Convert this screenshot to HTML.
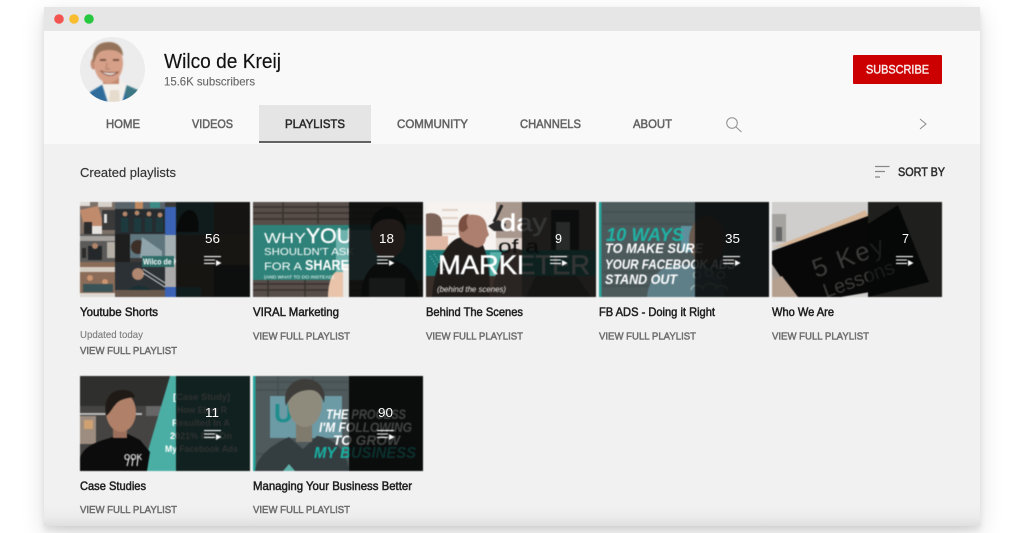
<!DOCTYPE html>
<html lang="en"><head><meta charset="utf-8"><title>Wilco de Kreij - Playlists</title>
<style>
html,body{margin:0;padding:0;width:1024px;height:533px;overflow:hidden;background:#fff}
#sh{position:absolute;left:44px;top:7px;width:936px;height:519px;box-shadow:0 8px 22px rgba(0,0,0,.13),0 4px 6px rgba(0,0,0,.09)}
svg.page{position:absolute;left:0;top:0;font-family:"Liberation Sans",sans-serif;filter:blur(.3px)}
.tab{font-size:11.5px;fill:#636363;stroke:#636363;stroke-width:.5}
.t{font-size:12px;fill:#1e1e1e;stroke:#1e1e1e;stroke-width:.5}
.v{font-size:10.5px;fill:#6e6e6e;stroke:#6e6e6e;stroke-width:.5}
.n{font-size:13px;fill:#fff}
.blur{filter:blur(.55px)}
.blur2{filter:blur(.8px)}
</style></head><body>
<div id="sh"></div>
<svg class="page" width="1024" height="533" viewBox="0 0 1024 533" xmlns="http://www.w3.org/2000/svg">
<defs>
<linearGradient id="bot" x1="0" y1="0" x2="0" y2="1"><stop offset="0" stop-color="#f1f1f1"/><stop offset=".55" stop-color="#ececec"/><stop offset="1" stop-color="#dfdfdf"/></linearGradient>
<clipPath id="av"><circle cx="112.5" cy="69.5" r="32.5"/></clipPath>
<g id="pl"><path d="M124 54.6h17M124 58h11M124 61.4h11" stroke="#fff" stroke-width="1.1" fill="none"/><path d="M136 58l5.5 3-5.500 3z" fill="#fff"/></g>
</defs>
<rect x="44" y="7" width="936" height="519" fill="#f1f1f1"/>
<rect x="44" y="505" width="936" height="21" fill="url(#bot)"/>
<rect x="44" y="7" width="936" height="24" fill="#e6e6e6"/>
<rect x="44" y="31" width="936" height="113" fill="#f9f9f9"/>
<circle cx="59" cy="19" r="4.800" fill="#f2554f"/><circle cx="74" cy="19" r="4.800" fill="#fbbd30"/><circle cx="89" cy="19" r="4.800" fill="#27c840"/>

<!-- avatar -->
<circle cx="112.500" cy="69.500" r="32.500" fill="#ececec"/>
<g clip-path="url(#av)"><g class="blur2">
<path d="M88 102l2-10 15-9h14l15 6 6 13z" fill="#2f6c9c"/>
<path d="M124 84l14 6 2 12h-13z" fill="#3d7785"/>
<path d="M102 84l6 19h14l5-19-8-4h-10z" fill="#f3f0ec"/>
<path d="M110 90h9l1 12h-11z" fill="#e6dccd"/>
<rect x="103" y="74" width="16" height="10" fill="#c4896e"/>
<ellipse cx="93.500" cy="64" rx="2.800" ry="5.500" fill="#c08a72"/>
<ellipse cx="108.500" cy="63" rx="14.500" ry="20" fill="#d6a088"/>
<path d="M93 63c-1-14 4-21 16-21 9 0 14 6 14 14-3-4-7-6-13-6-6 0-10 1-12 4-3 3-2 6-5 9z" fill="#94735a"/>
<path d="M100 60h6M113 60h6" stroke="#5c3e2e" stroke-width="1.400"/>
<path d="M107 63l-1 6h4" fill="none" stroke="#b07c64" stroke-width="1"/>
<path d="M101 71c4 5 12 6 17 1-4 1-12 1-17-1z" fill="#fff" stroke="#7c4c3c" stroke-width=".9"/>
</g></g>

<!-- header text -->
<text x="164" y="68" font-size="20" fill="#111" stroke="#111" stroke-width=".15" textLength="117" lengthAdjust="spacingAndGlyphs">Wilco de Kreij</text>
<text x="164" y="85.500" font-size="12" fill="#666" stroke="#666" stroke-width=".12" textLength="91" lengthAdjust="spacingAndGlyphs">15.6K subscribers</text>
<rect x="853" y="55" width="89" height="29" rx="1" fill="#cc0000"/>
<text x="866" y="73.500" font-size="11.500" fill="#fbeaea" stroke="#fbeaea" stroke-width=".45" textLength="63" lengthAdjust="spacingAndGlyphs">SUBSCRIBE</text>

<!-- tabs -->
<rect x="259" y="105" width="112" height="36" fill="#e5e5e5"/>
<rect x="259" y="141" width="112" height="2" fill="#626262"/>
<text x="106" y="128" class="tab" textLength="34" lengthAdjust="spacingAndGlyphs">HOME</text>
<text x="192" y="128" class="tab" textLength="41" lengthAdjust="spacingAndGlyphs">VIDEOS</text>
<text x="285" y="128" class="tab" style="fill:#2a2a2a;stroke:#2a2a2a" textLength="60" lengthAdjust="spacingAndGlyphs">PLAYLISTS</text>
<text x="397" y="128" class="tab" textLength="71" lengthAdjust="spacingAndGlyphs">COMMUNITY</text>
<text x="520" y="128" class="tab" textLength="61" lengthAdjust="spacingAndGlyphs">CHANNELS</text>
<text x="633" y="128" class="tab" textLength="39" lengthAdjust="spacingAndGlyphs">ABOUT</text>
<g fill="none" stroke="#8f8f8f" stroke-width="1"><circle cx="732" cy="123" r="5.300"/><path d="M736 127l5.500 5"/></g>
<path d="M920 119l6 5-6 5" fill="none" stroke="#8a8a8a" stroke-width="1"/>

<text x="80" y="177" font-size="13" fill="#333" stroke="#333" stroke-width=".15" textLength="96" lengthAdjust="spacingAndGlyphs">Created playlists</text>
<path d="M875 166.500h14.500M875 171.500h10M875 177h5" stroke="#888" stroke-width="1.200"/>
<text x="898" y="176" font-size="11.500" fill="#2c2c2c" stroke="#2c2c2c" stroke-width=".5" textLength="47" lengthAdjust="spacingAndGlyphs">SORT BY</text>

<!-- THUMB 1 -->
<svg x="80" y="202" width="170" height="95" viewBox="0 0 170 95" class="blur">
<rect width="170" height="95" fill="#3b3a39"/>
<rect width="35" height="32" fill="#7d7067"/>
<path d="M0 8l18-4 6 20H4z" fill="#c08a6c"/><rect x="4" y="20" width="8" height="12" fill="#2c2c2c"/><rect x="22" y="8" width="13" height="20" fill="#3a3a3a"/><path d="M18 0h14v5H18z" fill="#d5d0c8"/><path d="M0 0h10v4H0z" fill="#e0dcd6"/><rect x="24" y="12" width="3" height="9" fill="#ddd"/><rect x="12" y="24" width="10" height="8" fill="#e6e3df"/>
<rect x="35" width="50" height="33" fill="#262c2f"/>
<rect x="35" width="50" height="7" fill="#59636a"/><path d="M55 0h8v7h-8z" fill="#c08a62"/><path d="M70 0h10v6H70z" fill="#3a8a86"/>
<circle cx="45" cy="12" r="2.500" fill="#b08468"/><circle cx="57" cy="11" r="2.500" fill="#b08468"/><circle cx="69" cy="12" r="2.500" fill="#b08468"/><circle cx="80" cy="13" r="2.500" fill="#b08468"/>
<rect x="41" y="16" width="7" height="14" fill="#1d3b3e"/><rect x="54" y="16" width="7" height="14" fill="#1d3b3e"/><rect x="65" y="16" width="7" height="14" fill="#1d3b3e"/><rect x="76" y="16" width="7" height="14" fill="#1d3b3e"/>
<rect x="85" y="5" width="11" height="28" fill="#3a63b5"/>
<rect y="32" width="35" height="28" fill="#5c5a58"/><rect x="8" y="44" width="14" height="14" fill="#24282a"/><rect y="34" width="35" height="5" fill="#a5a29e"/><circle cx="15" cy="44" r="3" fill="#b08468"/><rect x="27" y="40" width="8" height="16" fill="#b5aea6"/><rect x="2" y="46" width="4" height="10" fill="#2b2b2b"/>
<rect x="35" y="32" width="15" height="28" fill="#1e1e1e"/>
<rect x="50" y="32" width="35" height="24" fill="#5f767e"/><circle cx="58" cy="45" r="7" fill="#3d2f28"/><path d="M62 35l20 14v7H60z" fill="#8fa4ab"/>
<rect x="85" y="33" width="11" height="28" fill="#a3afb3"/>
<rect y="60" width="35" height="35" fill="#8a6c58"/><rect y="65" width="35" height="5" fill="#d6cdc2"/><circle cx="10" cy="76" r="3" fill="#cc9470"/><circle cx="25" cy="80" r="3" fill="#cc9470"/><rect x="3" y="82" width="30" height="8" fill="#3a5357"/><rect y="91" width="35" height="4" fill="#ddd8d1"/>
<rect x="35" y="60" width="50" height="35" fill="#2c3135"/><circle cx="58" cy="72" r="6" fill="#b08770"/><path d="M44 95c2-14 26-16 32 0z" fill="#1a3034"/><path d="M63 67l22 14M63 71l22 14" stroke="#d8dde0" stroke-width="1"/>
<rect x="35" y="88" width="50" height="7" fill="#6a5a4e"/>
<rect x="85" y="61" width="11" height="24" fill="#aaa"/><rect x="85" y="85" width="11" height="10" fill="#3a63b5"/>
<rect x="62" y="54" width="32" height="11" fill="#2f6e69"/>
<text x="63" y="62.500" font-size="8" font-weight="bold" fill="#fff" textLength="46" lengthAdjust="spacingAndGlyphs">Wilco de Kreij</text>
<rect x="96" width="38" height="33" fill="#3f7c86"/><path d="M96 30c2-12 6-22 14-22 6 0 10 10 8 22z" fill="#111"/>
<rect x="134" width="36" height="33" fill="#5d5044"/><rect x="96" y="33" width="38" height="30" fill="#695a4a"/><rect x="134" y="33" width="36" height="30" fill="#70604e"/><rect x="96" y="63" width="38" height="32" fill="#6d5a48"/><rect x="134" y="63" width="36" height="32" fill="#2d2d2b"/><rect x="96" y="85" width="25" height="10" fill="#3c8a8e"/>
<rect x="96" width="74" height="95" fill="#070808" fill-opacity=".84"/>
<use href="#pl"/>
</svg>
<text x="205" y="243" class="n" textLength="15" lengthAdjust="spacingAndGlyphs">56</text>

<!-- THUMB 2 -->
<svg x="253" y="202" width="170" height="95" viewBox="0 0 170 95" class="blur">
<rect width="170" height="95" fill="#574e49"/>
<path d="M0 5h170M0 11h170M0 17h170M0 82h170M0 88h170M30 0v22M65 0v22M15 78v17M52 78v17" stroke="#38322f" stroke-width="1.500"/>
<rect y="23" width="170" height="55" fill="#2e8279"/>
<rect x="83" y="28" width="50" height="50" fill="#6fb3ae"/>
<path d="M85 70c-4-2-10 8-10 25h21V70z" fill="#e9c4aa"/>
<rect x="90" y="62" width="6" height="33" fill="#e8e8e4"/>
<ellipse cx="135" cy="35" rx="17" ry="22" fill="#b08a70"/>
<path d="M118 30c-2-16 8-25 18-25s19 9 17 25c-3-10-8-13-17-13s-15 4-18 13z" fill="#111"/>
<path d="M108 95c0-22 12-37 28-37s30 15 30 37z" fill="#1d2526"/>
<rect x="116" y="76" width="36" height="19" fill="#777"/>
<g fill="#fff">
<text x="11" y="41" font-size="15" textLength="42" lengthAdjust="spacingAndGlyphs">WHY</text>
<text x="53" y="41" font-size="21" stroke="#fff" stroke-width=".4" textLength="46" lengthAdjust="spacingAndGlyphs">YOU</text>
<text x="11" y="53" font-size="10.500" textLength="90" lengthAdjust="spacingAndGlyphs">SHOULDN'T ASK</text>
<text x="11" y="68" font-size="11" textLength="38" lengthAdjust="spacingAndGlyphs">FOR A</text>
<text x="52" y="68" font-size="15" font-weight="bold" textLength="44" lengthAdjust="spacingAndGlyphs">SHARE</text>
<text x="11" y="76.500" font-size="4.500" textLength="70" lengthAdjust="spacingAndGlyphs">(AND WHAT TO DO INSTEAD)</text>
</g>
<rect x="96" width="74" height="95" fill="#070808" fill-opacity=".86"/>
<use href="#pl"/>
</svg>
<text x="379" y="243" class="n" textLength="15" lengthAdjust="spacingAndGlyphs">18</text>

<!-- THUMB 3 -->
<svg x="426" y="202" width="170" height="95" viewBox="0 0 170 95" class="blur">
<rect width="170" height="95" fill="#d6c2b4"/>
<rect width="70" height="50" fill="#f7f3f0"/><path d="M16 8h16M16 16h16M16 24h16M16 32h14" stroke="#e0d2c8" stroke-width="2"/>
<path d="M0 12c8-2 16 0 16 10v16l-16 4z" fill="#7c6458"/>
<rect x="0" y="34" width="22" height="16" fill="#e0b8a4"/>
<rect x="70" y="0" width="26" height="95" fill="#a8978c"/>
<rect x="70" y="36" width="26" height="14" fill="#e0d6cf"/>
<rect y="48" width="170" height="26" fill="#1e7a76"/>
<rect x="64" y="50" width="32" height="24" fill="#54b0a6"/>
<rect x="0" y="74" width="96" height="21" fill="#3a2e28"/>
<path d="M6 95c2-25 10-50 24-58 8-4 20-3 26 4 6 12 8 30 8 54z" fill="#1f1c1a"/>
<path d="M76 50l12-4 8 2v47H64z" fill="#2a2422"/>
<path d="M33 26c0-10 8-15 17-13 8 1 11 8 11 14l2 6-3 3c-1 8-8 12-13 8-6-2-16-6-14-18z" fill="#ad7f6e"/>
<path d="M33 28c-2-10 4-16 10-16-3 4-3 8-1 14-3 3-5 6-9 2z" fill="#7a4f42"/>
<path d="M62 24l10-6 8 4-2 7-10 0z" fill="#2a2a2a"/><path d="M76 3L68 20" stroke="#222" stroke-width="3"/>
<path d="M4 54l8 12M8 52l10 16" stroke="#8ed0c7" stroke-width="1" stroke-dasharray="1 2"/>
<rect x="96" y="0" width="74" height="95" fill="#7f746c"/><rect x="125" y="8" width="28" height="62" fill="#222"/><rect x="130" y="20" width="14" height="32" fill="#bbb"/><path d="M100 95l10-22h40l15 22z" fill="#55504c"/>
<rect x="96" y="48" width="74" height="26" fill="#2a8e88"/>
<text x="74" y="29" font-size="24" fill="#fff" stroke="#fff" stroke-width=".5" textLength="47" lengthAdjust="spacingAndGlyphs">day</text>
<text x="72" y="51" font-size="19" fill="#111" textLength="41" lengthAdjust="spacingAndGlyphs">of a</text>
<text x="12" y="72" font-size="27" fill="#fff" stroke="#fff" stroke-width=".5" textLength="152" lengthAdjust="spacingAndGlyphs">MARKETER</text>
<text x="11" y="90" font-size="8.500" font-style="italic" fill="#f1ece8" textLength="69" lengthAdjust="spacingAndGlyphs">(behind the scenes)</text>
<rect x="96" width="74" height="95" fill="#070808" fill-opacity=".82"/>
<use href="#pl"/>
</svg>
<text x="555" y="243" class="n" textLength="7" lengthAdjust="spacingAndGlyphs">9</text>

<!-- THUMB 4 -->
<svg x="599" y="202" width="170" height="95" viewBox="0 0 170 95" class="blur">
<rect width="170" height="95" fill="#4c5a5c"/>
<path d="M3 10h94M3 22h94M3 70h94M3 84h94" stroke="#465254" stroke-width="2"/>
<rect x="0" width="2.500" height="95" fill="#27a49a"/>
<rect x="82" y="24" width="30" height="26" fill="#5f8f9c"/>
<path d="M48 95c2-20 14-32 32-32h20c14 0 24 14 26 32z" fill="#5f7f88"/>
<ellipse cx="108" cy="38" rx="18" ry="24" fill="#6a5a50"/>
<text x="7" y="39" font-size="18" font-weight="bold" font-style="italic" fill="#1fb3a5" textLength="78" lengthAdjust="spacingAndGlyphs">10 WAYS</text>
<g font-size="14" font-weight="bold" font-style="italic" fill="#fff">
<text x="6" y="51" textLength="98" lengthAdjust="spacingAndGlyphs">TO MAKE SURE</text>
<text x="6" y="67" textLength="130" lengthAdjust="spacingAndGlyphs">YOUR FACEBOOK ADS</text>
<text x="6" y="82" textLength="72" lengthAdjust="spacingAndGlyphs">STAND OUT</text>
</g>
<g fill="none" stroke="#a8bbb9" stroke-width="1.200"><circle cx="98" cy="73" r="3.500"/><circle cx="110" cy="71" r="3.500"/><circle cx="122" cy="73" r="3.500"/><path d="M92 88c0-5 10-8 12 0M104 86c2-6 12-6 14 0M116 88c2-6 12-6 12 0"/></g>
<rect x="96" width="74" height="95" fill="#070808" fill-opacity=".86"/>
<use href="#pl"/>
</svg>
<text x="725" y="243" class="n" textLength="15" lengthAdjust="spacingAndGlyphs">35</text>

<!-- THUMB 5 -->
<svg x="772" y="202" width="170" height="95" viewBox="0 0 170 95" class="blur">
<rect width="170" height="95" fill="#cfcecc"/>
<rect x="0" y="12" width="14" height="28" fill="#a5a39f"/><rect x="4" y="25" width="6" height="14" fill="#666"/>
<path d="M0 46L85 12l8-4 4 6-30 20z" fill="#d6b698"/>
<rect y="60" width="20" height="35" fill="#a8a098"/>
<path d="M0 49L126 3l31 77-88 15H26L12 80 0 62z" fill="#080808"/>
<path d="M0 78l10-4 16 21H0z" fill="#b5a090"/>
<rect x="96" width="74" height="95" fill="#44413e"/>
<path d="M96 22L126 3l31 77-61 15z" fill="#060606"/>
<g fill="#6e6e6a" opacity=".5"><text x="44" y="76" font-size="26" transform="rotate(-20 44 76)" letter-spacing="2">5 Key</text><text x="54" y="96" font-size="20" transform="rotate(-20 54 96)">Lessons</text></g>
<rect x="96" width="74" height="95" fill="#070808" fill-opacity=".6"/>
<use href="#pl"/>
</svg>
<text x="902" y="243" class="n" textLength="7" lengthAdjust="spacingAndGlyphs">7</text>

<!-- THUMB 6 -->
<svg x="80" y="376" width="170" height="95" viewBox="0 0 170 95" class="blur">
<rect width="170" height="95" fill="#454442"/>
<rect width="96" height="30" fill="#2f2f2e"/>
<rect y="40" width="16" height="28" fill="#9d8d80"/><rect x="4" y="44" width="9" height="9" fill="#cfa070"/>
<rect x="0" y="37" width="62" height="2" fill="#bbb"/>
<rect x="66" y="30" width="20" height="10" fill="#666"/>
<path d="M62 95L90 0h80v95z" fill="#4aaea4"/>
<path d="M0 95V82c4-12 16-16 30-20l14-6 16 8 10 12-3 19z" fill="#0c0c0c"/>
<rect x="33" y="50" width="14" height="12" fill="#9b6f5c"/>
<ellipse cx="41" cy="36" rx="15" ry="20" fill="#b08068"/>
<path d="M26 40c-3-15 4-27 17-26 7 0 11 3 12 7-8 1-16 2-20 8-3 3-4 7-9 11z" fill="#1f1a16"/>
<text x="44" y="84" font-size="8" font-weight="bold" fill="#ddd">OOK</text><path d="M47 90l2-8M52 90l1-8M57 90l1-8" stroke="#ddd" stroke-width="1.200"/>
<rect x="96" width="74" height="95" fill="#3e9f97"/>
<g font-size="9.500" font-weight="bold" fill="#fff">
<text x="93" y="24" textLength="57" lengthAdjust="spacingAndGlyphs">[Case Study]</text>
<text x="97" y="37" textLength="50" lengthAdjust="spacingAndGlyphs">How Ebay R</text>
<text x="92" y="50" textLength="58" lengthAdjust="spacingAndGlyphs">Resulted In A</text>
<text x="90" y="63" textLength="62" lengthAdjust="spacingAndGlyphs">2021% ROI On</text>
<text x="85" y="76" textLength="73" lengthAdjust="spacingAndGlyphs">My Facebook Ads</text>
</g>
<rect x="96" width="74" height="95" fill="#070808" fill-opacity=".84"/>
<use href="#pl"/>
</svg>
<text x="205" y="417" class="n" textLength="14" lengthAdjust="spacingAndGlyphs">11</text>

<!-- THUMB 7 -->
<svg x="253" y="376" width="170" height="95" viewBox="0 0 170 95" class="blur">
<rect width="96" height="95" fill="#4f5a5c"/><rect x="96" width="74" height="95" fill="#1a1a1a"/>
<path d="M3 6h94M3 14h94M3 78h94M25 0v20M60 0v20" stroke="#454f50" stroke-width="1.500"/>
<rect x="0" width="2.500" height="95" fill="#24a89c"/>
<rect x="17" y="20" width="72" height="42" fill="#6c9aa5"/>
<text x="21" y="46" font-size="26" font-weight="bold" fill="#1e8e8d">U</text>
<path d="M2 95c2-16 20-28 34-34l14 12 14-13c18 2 30 16 32 35z" fill="#343d40"/>
<rect x="43" y="44" width="16" height="22" fill="#7f7a6c"/>
<ellipse cx="52" cy="28" rx="17" ry="23" fill="#8f8b7c"/>
<path d="M33 30c-4-16 6-27 19-27s22 9 19 24c-3-9-7-13-14-13-10 0-19 4-24 16z" fill="#3e3d3a"/>
<path d="M30 95l6-7 6 7z" fill="#5db0a8"/>
<g font-weight="bold" font-style="italic">
<text x="73" y="43" font-size="14" fill="#fff" textLength="80" lengthAdjust="spacingAndGlyphs">THE PROCESS</text>
<text x="66" y="56" font-size="14" fill="#fff" textLength="93" lengthAdjust="spacingAndGlyphs">I'M FOLLOWING</text>
<text x="80" y="69" font-size="14" fill="#fff" textLength="67" lengthAdjust="spacingAndGlyphs">TO GROW</text>
<text x="61" y="82" font-size="16" fill="#19b2a5" textLength="102" lengthAdjust="spacingAndGlyphs">MY BUSINESS</text>
</g>
<rect x="96" width="74" height="95" fill="#070808" fill-opacity=".76"/>
<use href="#pl"/>
</svg>
<text x="378" y="417" class="n" textLength="15" lengthAdjust="spacingAndGlyphs">90</text>

<!-- titles -->
<text x="80" y="316" class="t" textLength="78" lengthAdjust="spacingAndGlyphs">Youtube Shorts</text>
<text x="253" y="316" class="t" textLength="86" lengthAdjust="spacingAndGlyphs">VIRAL Marketing</text>
<text x="426" y="316" class="t" textLength="97" lengthAdjust="spacingAndGlyphs">Behind The Scenes</text>
<text x="599" y="316" class="t" textLength="116" lengthAdjust="spacingAndGlyphs">FB ADS - Doing it Right</text>
<text x="772" y="316" class="t" textLength="62" lengthAdjust="spacingAndGlyphs">Who We Are</text>
<text x="80" y="338" font-size="10.500" fill="#7c7c7c" stroke="#7c7c7c" stroke-width=".12" textLength="63" lengthAdjust="spacingAndGlyphs">Updated today</text>
<text x="80" y="354" class="v" textLength="97" lengthAdjust="spacingAndGlyphs">VIEW FULL PLAYLIST</text>
<text x="253" y="339.500" class="v" textLength="97" lengthAdjust="spacingAndGlyphs">VIEW FULL PLAYLIST</text>
<text x="426" y="339.500" class="v" textLength="97" lengthAdjust="spacingAndGlyphs">VIEW FULL PLAYLIST</text>
<text x="599" y="339.500" class="v" textLength="97" lengthAdjust="spacingAndGlyphs">VIEW FULL PLAYLIST</text>
<text x="772" y="339.500" class="v" textLength="97" lengthAdjust="spacingAndGlyphs">VIEW FULL PLAYLIST</text>
<text x="80" y="490" class="t" textLength="66" lengthAdjust="spacingAndGlyphs">Case Studies</text>
<text x="253" y="490" class="t" textLength="159" lengthAdjust="spacingAndGlyphs">Managing Your Business Better</text>
<text x="80" y="513" class="v" textLength="97" lengthAdjust="spacingAndGlyphs">VIEW FULL PLAYLIST</text>
<text x="253" y="513" class="v" textLength="97" lengthAdjust="spacingAndGlyphs">VIEW FULL PLAYLIST</text>
</svg>
</body></html>
